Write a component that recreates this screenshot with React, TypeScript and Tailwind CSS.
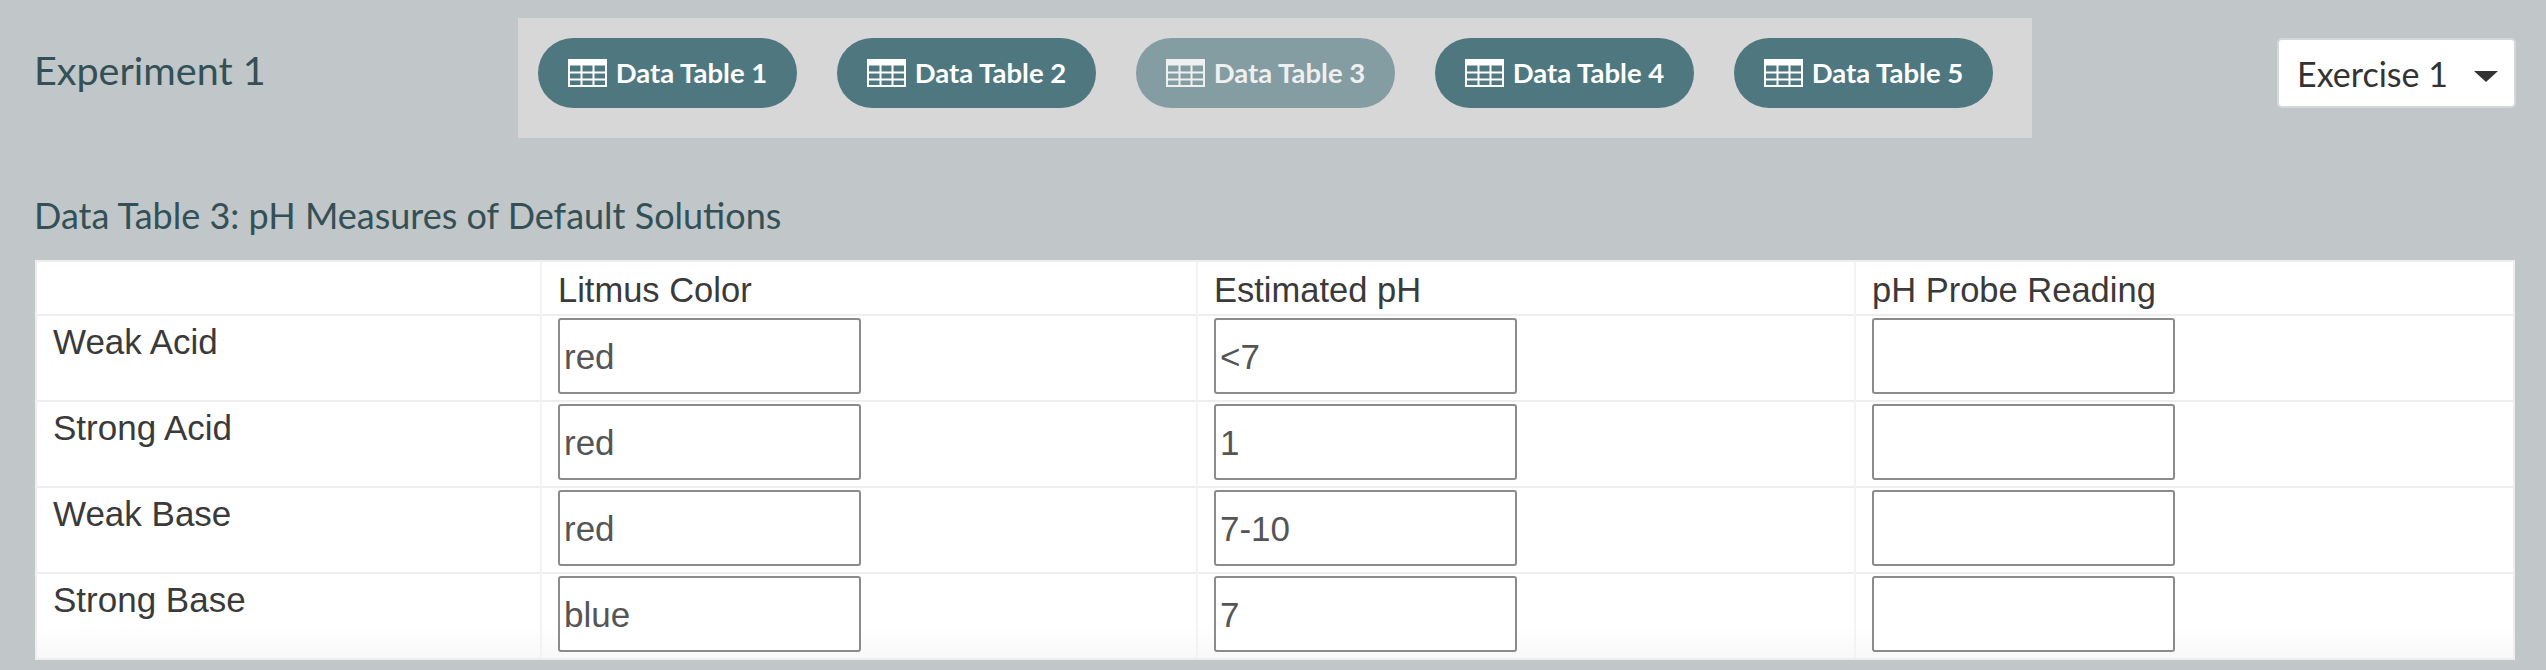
import React from 'react';

const TABS = ['Data Table 1', 'Data Table 2', 'Data Table 3', 'Data Table 4', 'Data Table 5'];

const ROWS = [
  { label: 'Weak Acid', litmus: 'red', estimated: '<7' },
  { label: 'Strong Acid', litmus: 'red', estimated: '1' },
  { label: 'Weak Base', litmus: 'red', estimated: '7-10' },
  { label: 'Strong Base', litmus: 'blue', estimated: '7' },
];

const TableIcon = () => (
  <svg width="39" height="28" viewBox="0 0 39 28" className="shrink-0" fill="none" stroke="currentColor">
    <rect x="1" y="1" width="37" height="26" strokeWidth="2" />
    <rect x="1" y="1" width="37" height="5" fill="currentColor" strokeWidth="1" />
    <path d="M1 13.5h37M1 20.5h37M13.5 6v21M25.5 6v21" strokeWidth="2" />
  </svg>
);

const Cell = ({ value }: { value: string }) => (
  <td className="border-l-2 border-[#f3f3f3] pl-[16px] pt-[2px] pb-[6px] align-top">
    <input
      readOnly
      value={value}
      className="block h-[76px] w-[303px] rounded-[3px] border-2 border-[#8b8b8b] bg-white pl-[4px] pt-[2px] text-[35px] text-[#555] outline-none"
    />
  </td>
);

export default function App() {
  return (
    <div className="h-[670px] w-[2546px] overflow-hidden bg-[#c1c6c9] font-['Liberation_Sans',sans-serif]">
      <div className="flex h-[138px] items-start pt-[18px]">
        <h1 className="w-[518px] pl-[34px] pt-[27px] font-['Lato',sans-serif] text-[39.5px] leading-[50px] text-[#345057]">
          Experiment 1
        </h1>
        <nav className="flex h-[120px] w-[1514px] gap-[40px] bg-[#d7d7d7] px-[20px] pt-[20px]">
          {TABS.map((tab, i) => (
            <button
              key={tab}
              className={`flex h-[70px] w-[259px] items-center justify-center gap-[9px] rounded-[35px] bg-[#4e7780] font-['Lato',sans-serif] text-[27.5px] font-bold text-white ${i === 2 ? 'opacity-60' : ''}`}
            >
              <TableIcon />
              {tab}
            </button>
          ))}
        </nav>
        <div className="ml-[245px] mt-[20px] flex h-[70px] w-[239px] items-center rounded-[5px] border-2 border-[#d5d8da] bg-white pl-[18px] font-['Lato',sans-serif] text-[34px] text-[#333]">
          Exercise 1
          <span className="ml-[26px] mt-[6px] h-0 w-0 border-x-[12px] border-t-[11px] border-x-transparent border-t-[#333]" />
        </div>
      </div>
      <h2 className="pl-[34px] pt-[55px] font-['Lato',sans-serif] text-[36px] leading-[44px] text-[#345057]">
        Data Table 3: pH Measures of Default Solutions
      </h2>
      <div className="ml-[35px] mt-[23px] w-[2480px] border-2 border-[#eee] bg-gradient-to-b from-white from-[92%] to-[#f8f8f8]">
        <table className="w-full table-fixed border-collapse text-[#3a3a3a]">
          <colgroup>
            <col className="w-[504px]" />
            <col className="w-[656px]" />
            <col className="w-[658px]" />
            <col />
          </colgroup>
          <thead>
            <tr className="h-[53px]">
              <th />
              {['Litmus Color', 'Estimated pH', 'pH Probe Reading'].map((h) => (
                <th key={h} className="border-l-2 border-[#f3f3f3] pl-[16px] pt-[3px] text-left text-[34.5px] font-normal leading-[40px]">
                  {h}
                </th>
              ))}
            </tr>
          </thead>
          <tbody>
            {ROWS.map((row) => (
              <tr key={row.label} className="border-t-2 border-[#eee]">
                <td className="pl-[16px] pt-[6px] align-top text-[35px] leading-[40px]">{row.label}</td>
                <Cell value={row.litmus} />
                <Cell value={row.estimated} />
                <Cell value="" />
              </tr>
            ))}
          </tbody>
        </table>
      </div>
    </div>
  );
}
